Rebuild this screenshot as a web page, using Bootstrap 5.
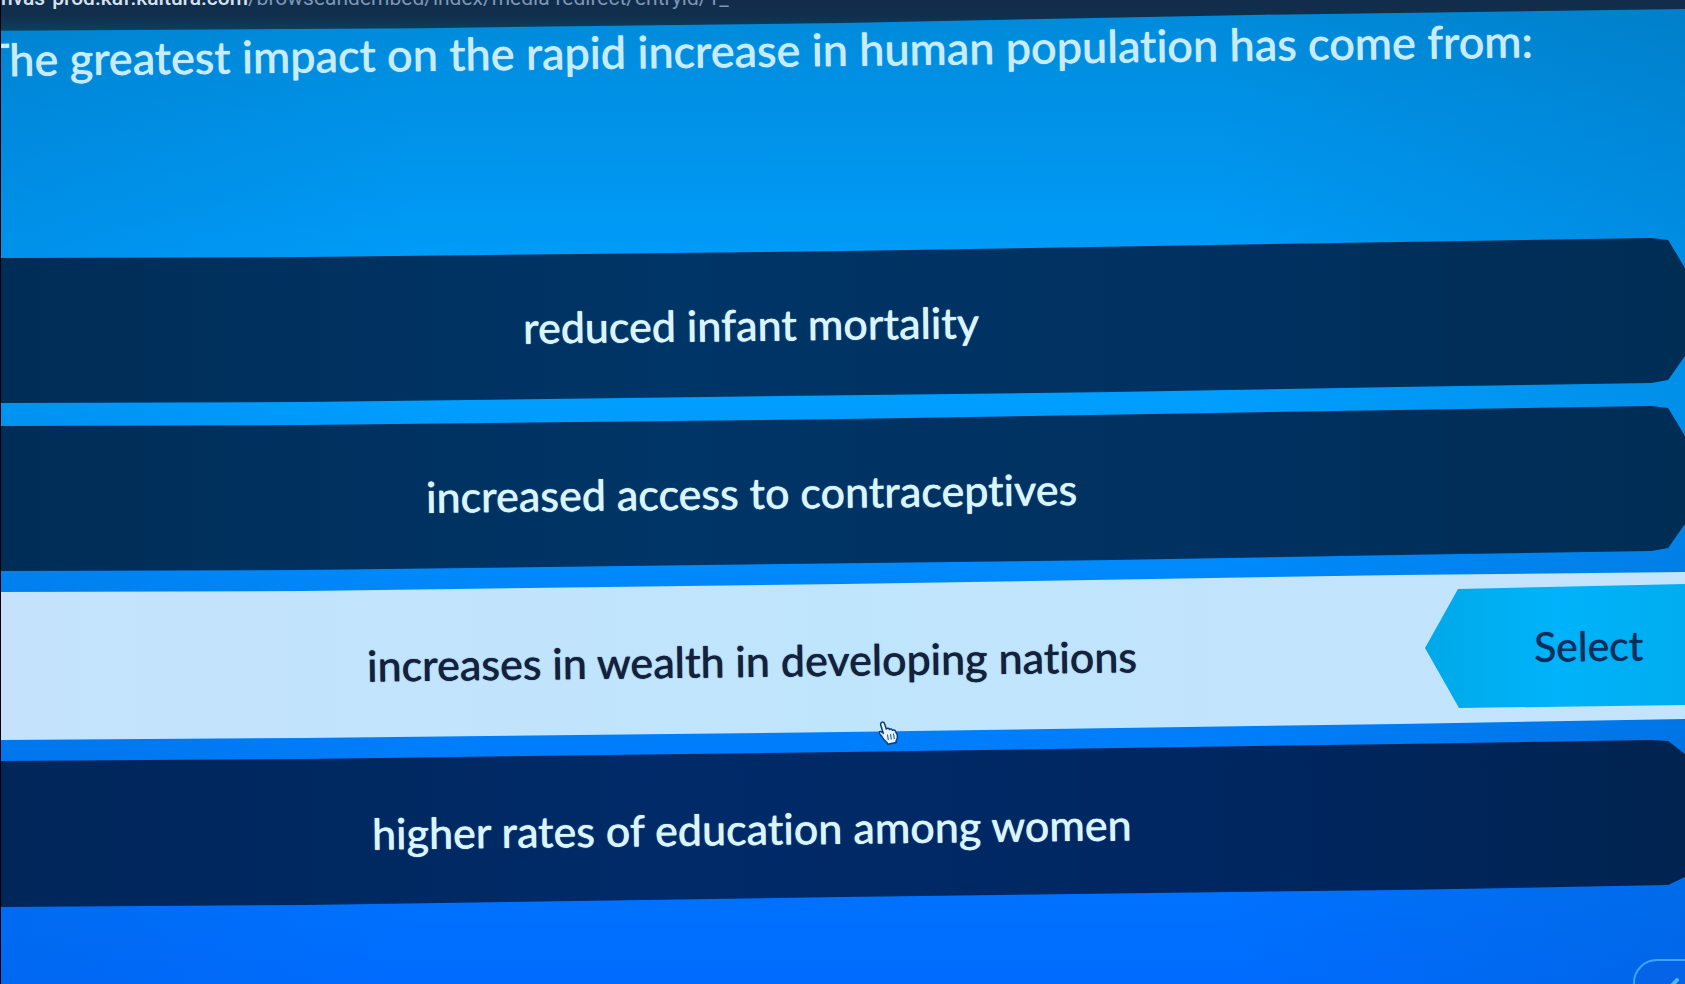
<!DOCTYPE html>
<html lang="en">
<head>
<meta charset="utf-8">
<meta name="viewport" content="width=device-width, initial-scale=1">
<title>Quiz question</title>
<link href="https://cdn.jsdelivr.net/npm/bootstrap@5.3.0/dist/css/bootstrap.min.css" rel="stylesheet">
<style>
  body {
    font-family: Lato, sans-serif;
    background:
      linear-gradient(90deg, rgba(0,60,120,.1), transparent 25%, transparent 72%, rgba(0,70,120,.16)),
      linear-gradient(180deg, #008ad8 0, #0092e8 12%, #009bf8 26%, #009eff 41%, #0088fb 59%, #007dfa 76%, #0070ff 93%, #006cff 100%);
  }
  .quiz-page { min-height: 100vh; border-left: 1px solid #000; }
  .address-bar {
    height: 32px;
    padding-bottom: 22px;
    background: linear-gradient(180deg, #122c4c 0, #102f4c 50%, #0c4160 100%);
    clip-path: polygon(0 0, 100% 0, 100% 28%, 75% 46%, 50% 72%, 25% 88%, 0 96%);
  }
  .address-link { font: 400 21px/24px Roboto, sans-serif; color: #7d98b4; }
  .address-link strong { font-weight: 500; color: #d5e2ee; }
  .question {
    height: 204px;
    color: #c8ecff;
    font-size: 45px;
    line-height: 36px;
    font-weight: 500;
  }
  .tilt {
    display: inline-block;
    font-variant-ligatures: none;
    text-shadow: 0 0 1px currentColor;
    transform: rotate(-0.7deg);
  }
  .question .tilt { margin-left: -18px; }
  .answer-row {
    height: 168px;
    background: linear-gradient(90deg, #002d57, #003567 40%, #00305f 75%, #002d54);
    clip-path: polygon(0 22px, 18% 21px, 50% 15px, 83% 6px, 98% 2px, 99% 4px, 100% 32px, 100% 120px, 99% 144px, 98% 147px, 83% 151px, 66% 156px, 18% 166px, 0 167px);
  }
  .answer-row.last-answer {
    background: linear-gradient(90deg, #00265a, #002b68 40%, #002660 75%, #00234f);
    clip-path: polygon(0 21px, 18% 19px, 50% 12px, 83% 4px, 98% 0, 99% 1px, 100% 14px, 100% 137px, 99% 145px, 83% 150px, 50% 157px, 18% 165px, 0 167px);
  }
  .answer-row.is-hovered {
    background: linear-gradient(90deg, #c4e2fb, #bfe5fd 50%, #c4e3fc);
    clip-path: polygon(0 20px, 18% 19px, 50% 12px, 83% 3px, 100% 0, 100% 147px, 83% 152px, 50% 160px, 18% 166px, 0 168px);
  }
  .answer-text {
    padding: 10px 0 0 77px;
    border: 0;
    background: none;
    color: #d9f5ff;
    font-size: 43px;
    font-weight: 500;
    line-height: 56px;
  }
  .is-hovered .answer-text { color: #14213c; }
  .answer-action { width: 260px; }
  .select-btn {
    height: 124px;
    margin-top: 12px;
    border: 0;
    padding: 0 0 0 68px;
    background: linear-gradient(90deg, #00a9e8, #00b3fa 50%, #00adf0);
    color: #062d5c;
    font-size: 41px;
    line-height: 48px;
    clip-path: polygon(0 64px, 33px 5px, 100% 0, 100% 121px, 34px 124px);
  }
  .hand-cursor { left: 52%; top: 484px; width: 24px; height: 26px; }
  .quiz-footer { height: 76px; padding-top: 51px; }
  .nav-pill {
    width: 120px;
    height: 72px;
    margin-right: -68px;
    border: 2px solid #3fa4fb;
    border-radius: 24px;
    background: #0563e8;
    color: #58b4ff;
  }
</style>
</head>
<body>
<div class="quiz-page d-flex flex-column overflow-hidden">
  <header class="address-bar d-flex align-items-end overflow-hidden">
    <a class="address-link text-nowrap text-decoration-none" href="#"><strong>nvas-prod.kaf.kaltura.com</strong>/browseandembed/index/media-redirect/entryid/1_</a>
  </header>
  <main class="position-relative">
    <h1 class="question text-nowrap mb-0"><span class="tilt">The greatest impact on the rapid increase in human population has come from:</span></h1>
    <div class="position-relative">
      <div class="answer-row d-flex">
        <button type="button" class="answer-text flex-grow-1 text-nowrap"><span class="tilt">reduced infant mortality</span></button>
        <div class="answer-action"></div>
      </div>
      <div class="answer-row d-flex">
        <button type="button" class="answer-text flex-grow-1 text-nowrap"><span class="tilt">increased access to contraceptives</span></button>
        <div class="answer-action"></div>
      </div>
      <div class="answer-row is-hovered d-flex">
        <button type="button" class="answer-text flex-grow-1 text-nowrap"><span class="tilt">increases in wealth in developing nations</span></button>
        <div class="answer-action"><button type="button" class="select-btn w-100"><span class="tilt">Select</span></button></div>
      </div>
      <div class="answer-row last-answer d-flex">
        <button type="button" class="answer-text flex-grow-1 text-nowrap"><span class="tilt">higher rates of education among women</span></button>
        <div class="answer-action"></div>
      </div>
      <svg class="hand-cursor position-absolute" viewBox="0 0 24 26" aria-hidden="true">
        <path d="M4.500 2.500c1.500-1 2.800 0 3.200 1.500l1.600 5c1-1.200 2.700-.8 3.200.5 1-1 2.600-.6 3 .8 1.200-.8 2.600-.3 3 1l1.800 3.700c.7 2.500-.5 4.500-1.300 6l.3 1.500-8.500 1.700-.8-1.700c-2-1.500-4-3.500-5.500-6.500-1.200-1.500-2.800-2.700-2.200-3.800.7-1.200 2.700-.4 4 1.200L3.700 5c-.3-1 0-2 .8-2.500z" fill="#e3f3ff" stroke="#0c3a7c" stroke-width="1.500" stroke-linejoin="round"/>
        <path d="M10.500 14.500l.8 5.500M13.500 14l.8 5.500M16.500 13.500l.8 5.500" fill="none" stroke="#1d4f8f"/>
      </svg>
    </div>
  </main>
  <footer class="quiz-footer d-flex justify-content-end overflow-hidden">
    <button type="button" class="nav-pill flex-shrink-0 d-flex align-items-start p-0" aria-label="Previous">
      <svg width="50" height="50" viewBox="0 0 50 50" aria-hidden="true"><path d="M42 19L30 32l12 13" fill="none" stroke="currentColor" stroke-width="4" stroke-linecap="round"/></svg>
    </button>
  </footer>
</div>
<script src="https://cdn.jsdelivr.net/npm/bootstrap@5.3.0/dist/js/bootstrap.bundle.min.js"></script>
</body>
</html>
